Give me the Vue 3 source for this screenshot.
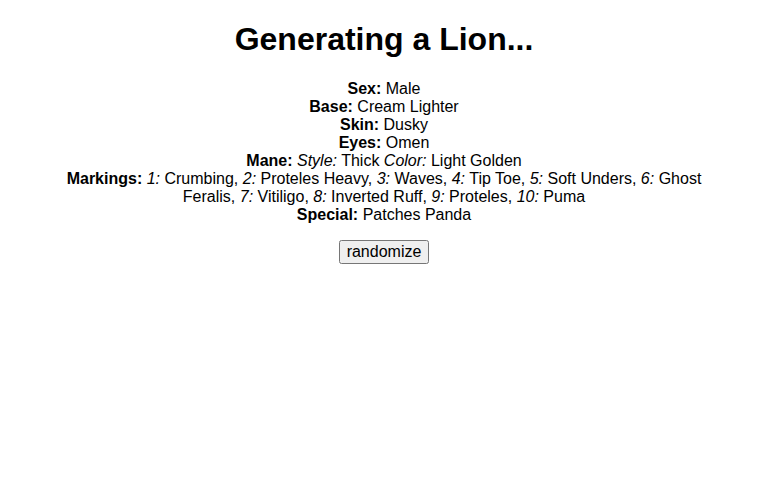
<script setup>
import { ref } from 'vue'

const markingPool = [
  'Crumbing', 'Proteles Heavy', 'Waves', 'Tip Toe', 'Soft Unders',
  'Ghost Feralis', 'Vitiligo', 'Inverted Ruff', 'Proteles', 'Puma',
]
const pools = {
  sex: ['Male', 'Female'],
  base: ['Cream Lighter', 'Light Golden'],
  skin: ['Dusky'],
  eyes: ['Omen'],
  style: ['Thick'],
  color: ['Light Golden', 'Cream Lighter'],
  special: ['Patches Panda'],
}

const lion = ref({
  sex: 'Male',
  base: 'Cream Lighter',
  skin: 'Dusky',
  eyes: 'Omen',
  style: 'Thick',
  color: 'Light Golden',
  special: 'Patches Panda',
  markings: [...markingPool],
})

function randomize() {
  const next = {}
  for (const [key, values] of Object.entries(pools)) {
    next[key] = values[Math.floor(Math.random() * values.length)]
  }
  next.markings = [...markingPool].sort(() => Math.random() - 0.5)
  lion.value = next
}
</script>

<template>
  <main class="generator">
    <h1 class="title">Generating a Lion...</h1>
    <div class="traits">
      <div><b>Sex:</b> {{ lion.sex }}</div>
      <div><b>Base:</b> {{ lion.base }}</div>
      <div><b>Skin:</b> {{ lion.skin }}</div>
      <div><b>Eyes:</b> {{ lion.eyes }}</div>
      <div><b>Mane:</b> <i>Style:</i> {{ lion.style }} <i>Color:</i> {{ lion.color }}</div>
      <div>
        <b>Markings:</b>{{ ' ' }}
        <template v-for="(name, i) in lion.markings" :key="name"><i>{{ i + 1 }}:</i> {{ name }}{{ i < lion.markings.length - 1 ? ', ' : '' }}</template>
      </div>
      <div><b>Special:</b> {{ lion.special }}</div>
    </div>
    <button class="randomize" type="button" @click="randomize">randomize</button>
  </main>
</template>

<style>
body {
  margin: 0;
  background: #ffffff;
}
</style>

<style scoped>
.generator {
  padding: 21px 60px;
  color: #000000;
  font-family: "Liberation Sans", Arial, sans-serif;
  font-size: 16px;
  line-height: 18px;
  text-align: center;
}

.title {
  margin: 0 0 22px;
  font-size: 32px;
  line-height: 37px;
  font-weight: bold;
}

.traits {
  margin-bottom: 16px;
}

.randomize {
  padding: 1px 6px;
  font: inherit;
}
</style>
